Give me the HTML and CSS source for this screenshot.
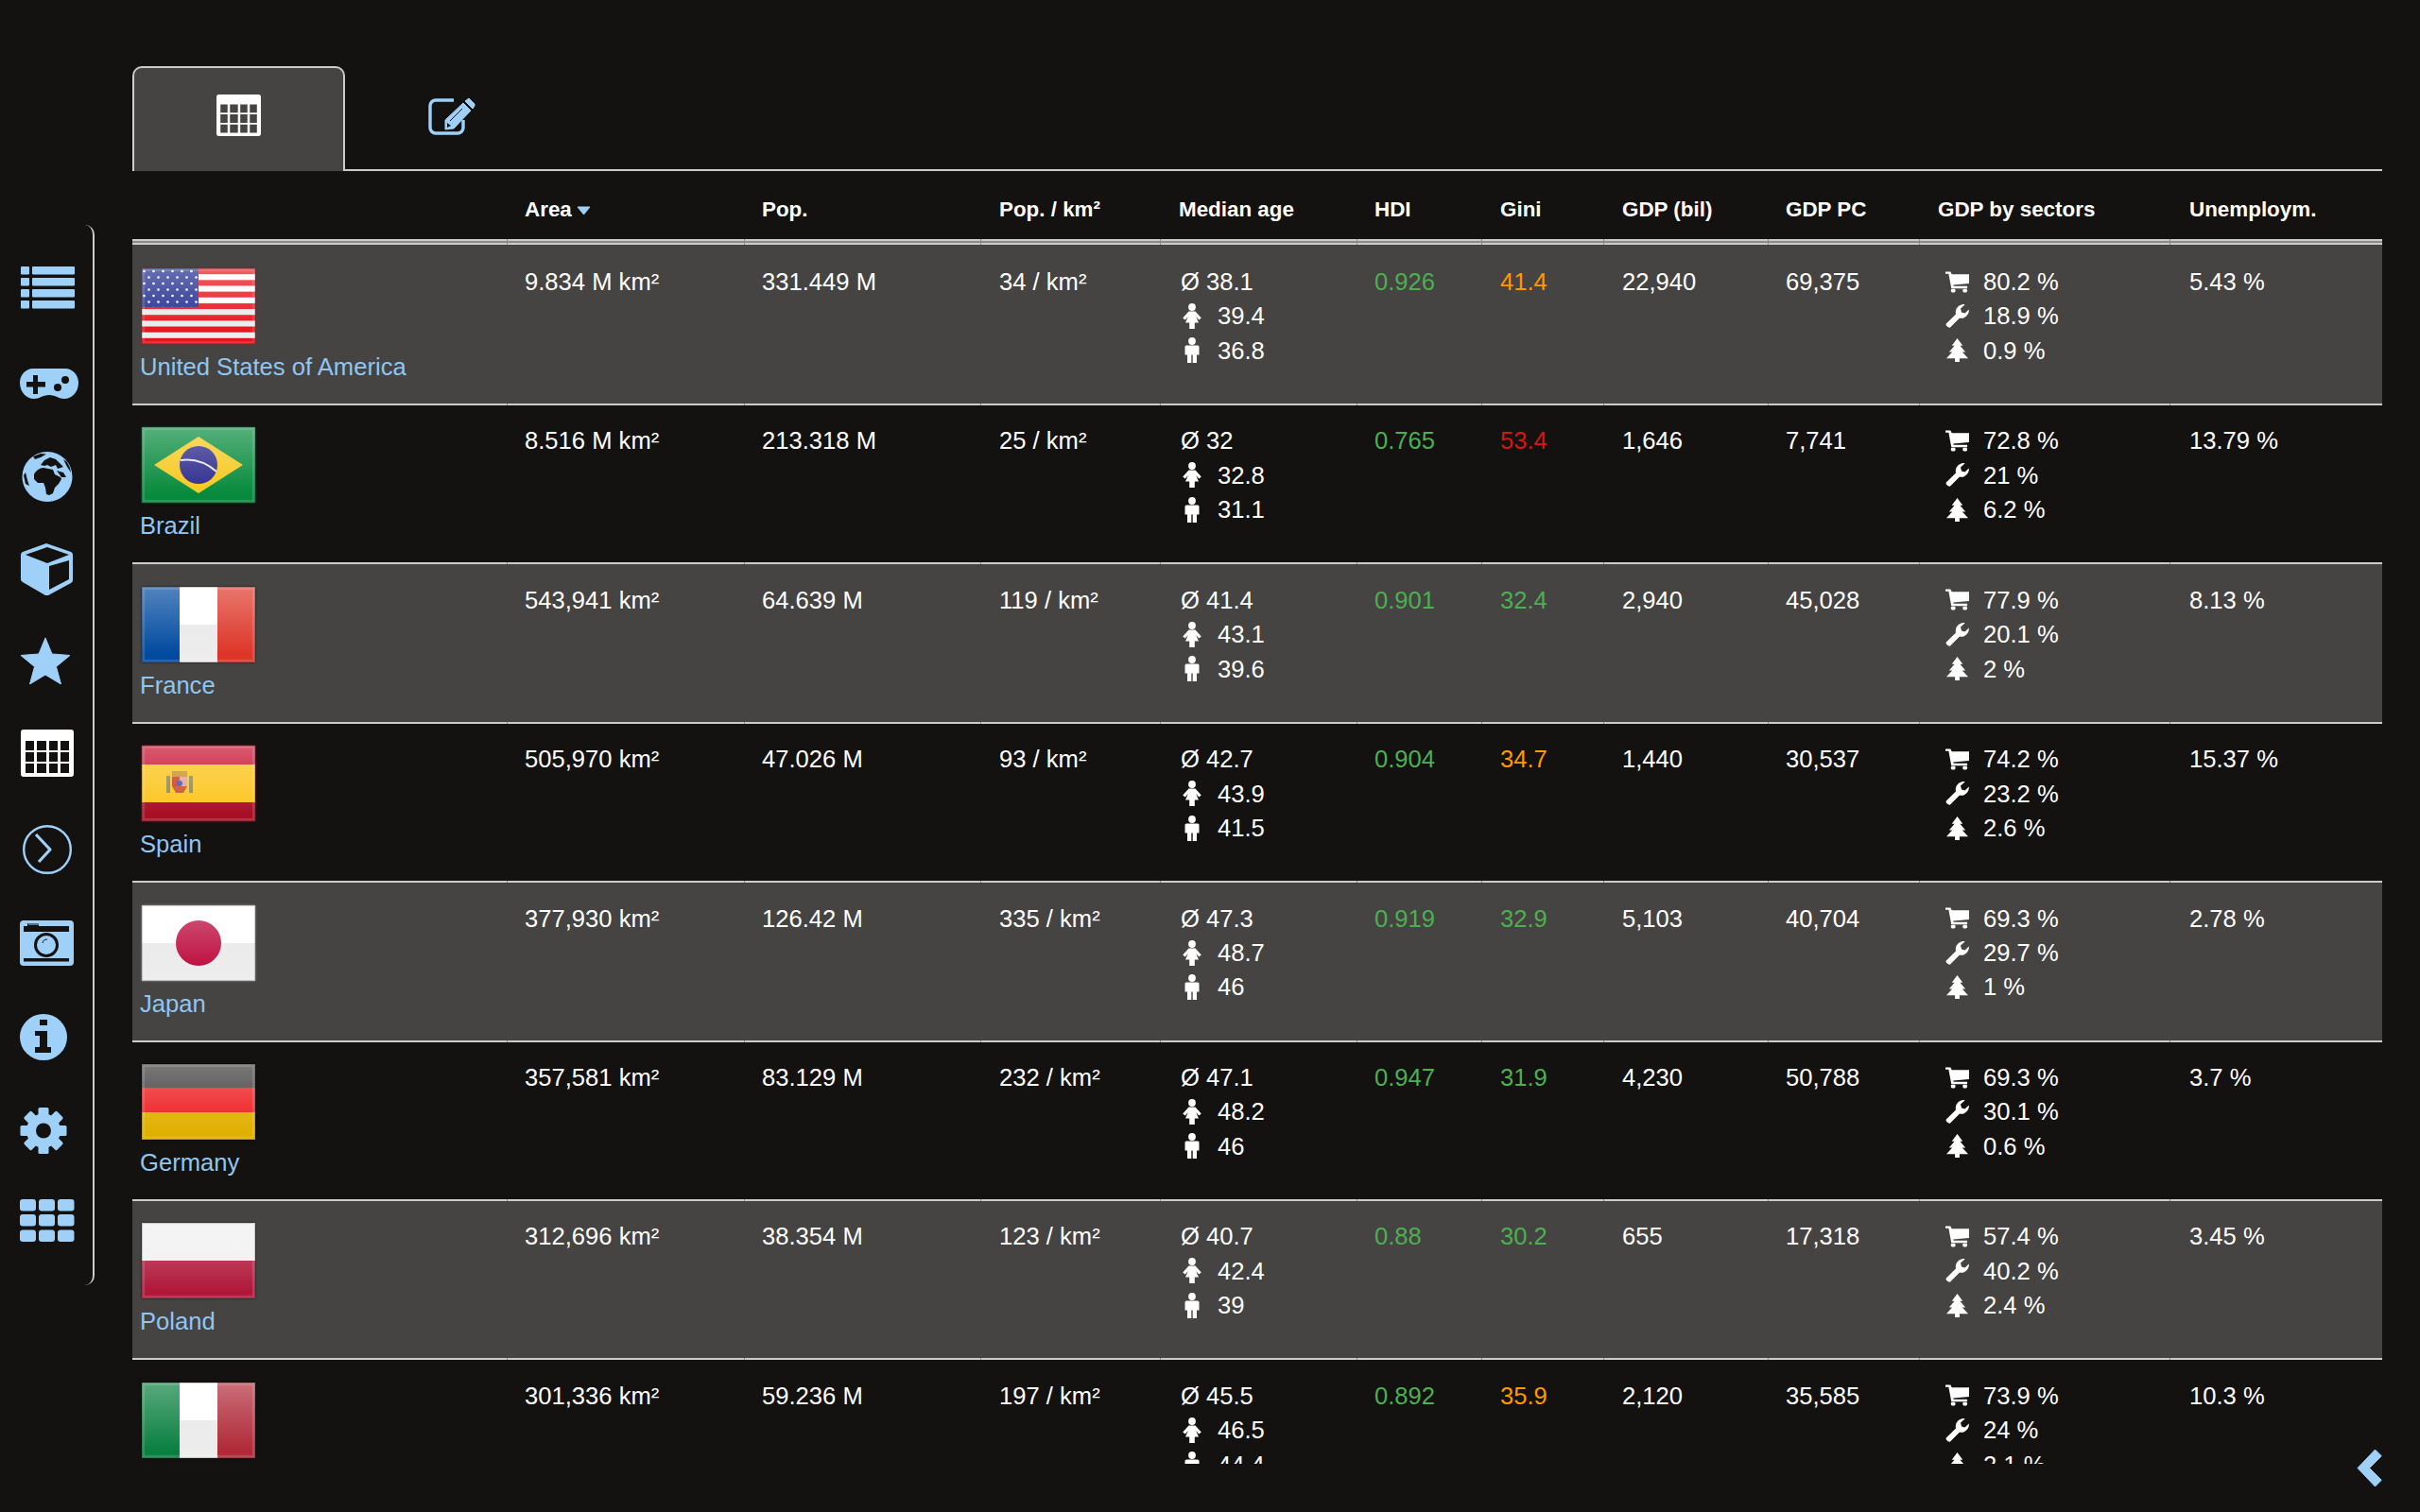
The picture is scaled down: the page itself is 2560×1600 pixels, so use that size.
FILE: index.html
```html
<!DOCTYPE html>
<html lang="en">
<head>
    <meta charset="UTF-8">
    <meta name="viewport" content="width=device-width, initial-scale=1.0">
    <title>Countries</title>
    <link rel="stylesheet" href="styles.css">
</head>
<body>
    <svg class="defs" width="0" height="0">
        <pattern id="stars" width="10" height="13" patternUnits="userSpaceOnUse">
            <circle cx="2.5" cy="3" r="1.3" fill="#fff"/>
            <circle cx="7.5" cy="9.5" r="1.3" fill="#fff"/>
        </pattern>
        <linearGradient id="white-band" x1="0" y1="0" x2="0" y2="1">
            <stop offset="0.5" stop-color="#fff"/>
            <stop offset="0.5" stop-color="#e8e8e8"/>
            <stop offset="1" stop-color="#eeeeee"/>
        </linearGradient>
        <symbol id="i-calendar" viewBox="0 0 56 50" preserveAspectRatio="none">
            <path fill-rule="evenodd" d="M3 0H53a3 3 0 0 1 3 3V47a3 3 0 0 1-3 3H3a3 3 0 0 1-3-3V3a3 3 0 0 1 3-3Z
                M5 12h9v10h-9Z M17 12h10v10h-10Z M30 12h9v10h-9Z M42 12h9v10h-9Z
                M5 24h9v10h-9Z M17 24h10v10h-10Z M30 24h9v10h-9Z M42 24h9v10h-9Z
                M5 36h9v10h-9Z M17 36h10v10h-10Z M30 36h9v10h-9Z M42 36h9v10h-9Z"/>
        </symbol>
        <symbol id="i-edit" viewBox="0 0 50 40">
            <path d="M27 3H8a6 6 0 0 0-6 6V32a6 6 0 0 0 6 6H31a6 6 0 0 0 6-6V24" fill="none" stroke="currentColor" stroke-width="3.4"/>
            <path d="M18 34L18 24 37 6 45 14 27 33ZM39 4L43 1 49 7 49 9 47 12Z" stroke="currentColor" stroke-linejoin="round"/>
            <path d="M23 25L36 12" stroke="#131211" stroke-width="1"/>
            <path d="M20 32V27L24 30Z" fill="#131211"/>
        </symbol>
        <symbol id="i-female" viewBox="0 0 20 27">
            <circle cx="10" cy="4" r="3.900"/>
            <path d="M6.500 8.500H13.500L19.800 15.500 17.300 17.500 14.200 14 17 20.500H12.800V27H7.200V20.500H3L5.800 14 2.700 17.500 .2 15.500Z"/>
        </symbol>
        <symbol id="i-male" viewBox="0 0 20 27">
            <circle cx="10" cy="4" r="3.900"/>
            <path d="M4 8.500H16A1.500 1.500 0 0 1 17.500 10V18.500H15V27H10.700V18.500H9.300V27H5V18.500H2.500V10A1.500 1.500 0 0 1 4 8.500Z"/>
        </symbol>
        <symbol id="i-cart" viewBox="0 0 26 23">
            <path d="M0 0H5.500L7 3H26V13L8.500 14.500 9 16H24V18.500H6.500L3.500 2.500H0Z"/>
            <rect x="6" y="19" width="5" height="4" rx="1.500"/>
            <rect x="19" y="19" width="5" height="4" rx="1.500"/>
        </symbol>
        <symbol id="i-wrench" viewBox="0 0 25 25">
            <path d="M.8 20.500L11 10.500C10 6 12.500 1 18.500 0 19.500 0 20.500 0 20.500 .5L16 4.500 17 8.500 20.500 9.500 24.800 5.500C25.500 11 20 16 15 14.500L5 24.500C3.500 25.500 -.5 22.500 .8 20.500Z"/>
        </symbol>
        <symbol id="i-tree" viewBox="0 0 24 26">
            <path d="M12 0L18 8H15L21 15H17.500L24 22H14.500V26H9.500V22H0L6.500 15H3L9 8H6Z"/>
        </symbol>
        <symbol id="i-list" viewBox="0 0 57 45">
            <rect width="9" height="8.500" rx="1"/><rect x="12" width="45" height="8.500" rx="1"/>
            <rect y="12" width="9" height="8.500" rx="1"/><rect x="12" y="12" width="45" height="8.500" rx="1"/>
            <rect y="24" width="9" height="8.500" rx="1"/><rect x="12" y="24" width="45" height="8.500" rx="1"/>
            <rect y="36" width="9" height="8.500" rx="1"/><rect x="12" y="36" width="45" height="8.500" rx="1"/>
        </symbol>
        <symbol id="i-game" viewBox="0 0 62 32">
            <path d="M14 0H48C56 0 62 7 62 15 62 25 55 32 47 32 41 32 38 28 31 28 24 28 21 32 15 32 7 32 0 25 0 15 0 7 6 0 14 0Z"/>
            <path d="M14 7H19V14H27V19.500H19V27H14V19.500H7V14H14Z" fill="#131211"/>
            <circle cx="48" cy="12" r="4" fill="#131211"/>
            <circle cx="40" cy="20" r="4" fill="#131211"/>
        </symbol>
        <symbol id="i-globe" viewBox="0 0 54 53">
            <circle cx="27" cy="26.500" r="26.500"/>
            <g fill="#131211">
                <path d="M13 24C15 20 19 17 23 17L28 18 33 19 35 24 41 27 42 29 39 34 35 38 33 44 29 46 26 45 25 38 23 33 17 33 13 29Z"/>
                <path d="M20 14L24 9 30 6 36 8 40 12 44 16 38 18 36 14 31 16 27 14 24 15Z"/>
                <path d="M37 20L44 22 47 27 42 27Z"/>
                <path d="M2 25L4 22 6 30 8 36 4 34Z"/>
                <path d="M12 5L20 2 26 2.500 20 6 14 8Z"/>
                <path d="M44 8L48 11 51 17 52 22 48 16Z"/>
            </g>
        </symbol>
        <symbol id="i-cube" viewBox="0 0 55 55">
            <path d="M27 0L53 9Q55 10 55 12V39Q55 41 53 42L29 55Q28 55 26 55L2 41Q0 40 0 38V12Q0 10 2 9Z"/>
            <path d="M5 12L28 4 51 12 28 21ZM30 24L51 18V38L30 49Z" fill="#131211"/>
        </symbol>
        <symbol id="i-star" viewBox="0 0 54 50">
            <path d="M27 1L34 18 53 19.500 38.500 31.500 43.500 50 27 40 10.500 50 15.500 31.500 1 19.500 20 18Z" stroke="currentColor" stroke-linejoin="round"/>
        </symbol>
        <symbol id="i-clock" viewBox="0 0 52 52">
            <ellipse cx="26" cy="26" rx="24.800" ry="24.800" fill="none" stroke="currentColor" stroke-width="2.400"/>
            <path d="M14 10L29 26 17 39" fill="none" stroke="currentColor" stroke-width="3.200" stroke-linejoin="round"/>
        </symbol>
        <symbol id="i-camera" viewBox="0 0 57 48">
            <rect width="57" height="48" rx="4"/>
            <path d="M8 3H20V6H52V12H4V6H8Z" fill="#131211"/>
            <rect x="9" y="3" width="11" height="2" fill="#9fd0f8" opacity=".5"/>
            <rect x="4" y="40" width="48" height="3.500" fill="#131211"/>
            <circle cx="28" cy="26" r="11.500" fill="none" stroke="#131211" stroke-width="3"/>
            <path d="M24 24A5 5 0 0 1 29 20" fill="none" stroke="#131211" stroke-width="1"/>
        </symbol>
        <symbol id="i-info" viewBox="0 0 50 49">
            <ellipse cx="25" cy="24.500" rx="25" ry="24.500"/>
            <path d="M21 6H29V12H21ZM16 18H29V35H33V41H16V35H21V23H16Z" fill="#131211"/>
        </symbol>
        <symbol id="i-gear" viewBox="0 0 50 49">
            <g transform="translate(25 24.500)">
                <circle r="18"/>
                <rect x="-5.500" y="-24.500" width="11" height="49" rx="1.500"/>
                <rect x="-5.500" y="-24.500" width="11" height="49" rx="1.500" transform="rotate(45)"/>
                <rect x="-5.500" y="-24.500" width="11" height="49" rx="1.500" transform="rotate(90)"/>
                <rect x="-5.500" y="-24.500" width="11" height="49" rx="1.500" transform="rotate(135)"/>
                <circle r="8" fill="#131211"/>
            </g>
        </symbol>
        <symbol id="i-apps" viewBox="0 0 58 46">
            <rect width="17" height="12.500" rx="3"/><rect x="20" width="17" height="12.500" rx="3"/><rect x="40" width="17.500" height="12.500" rx="3"/>
            <rect y="16" width="17" height="12.500" rx="3"/><rect x="20" y="16" width="17" height="12.500" rx="3"/><rect x="40" y="16" width="17.500" height="12.500" rx="3"/>
            <rect y="32.500" width="17" height="12.500" rx="3"/><rect x="20" y="32.500" width="17" height="12.500" rx="3"/><rect x="40" y="32.500" width="17.500" height="12.500" rx="3"/>
        </symbol>
    </svg>

    <div class="app">
        <nav class="sidebar">
            <a class="side-item"><svg class="list"><use href="#i-list"/></svg></a>
            <a class="side-item"><svg class="game"><use href="#i-game"/></svg></a>
            <a class="side-item"><svg class="globe"><use href="#i-globe"/></svg></a>
            <a class="side-item"><svg class="cube"><use href="#i-cube"/></svg></a>
            <a class="side-item"><svg class="star"><use href="#i-star"/></svg></a>
            <a class="side-item active"><svg class="calendar"><use href="#i-calendar"/></svg></a>
            <a class="side-item"><svg class="clock"><use href="#i-clock"/></svg></a>
            <a class="side-item"><svg class="camera"><use href="#i-camera"/></svg></a>
            <a class="side-item"><svg class="info"><use href="#i-info"/></svg></a>
            <a class="side-item"><svg class="gear"><use href="#i-gear"/></svg></a>
            <a class="side-item"><svg class="apps"><use href="#i-apps"/></svg></a>
        </nav>

        <main class="content">
            <div class="tabs">
                <a class="tab active"><svg class="tab-calendar"><use href="#i-calendar"/></svg></a>
                <a class="tab"><svg class="tab-edit"><use href="#i-edit"/></svg></a>
            </div>

            <div class="table-wrap">
                <table class="countries">
                    <colgroup>
                        <col class="c-name"><col class="c-area"><col class="c-pop"><col class="c-dens">
                        <col class="c-age"><col class="c-hdi"><col class="c-gini"><col class="c-gdp">
                        <col class="c-gdppc"><col class="c-sect"><col class="c-unemp">
                    </colgroup>
                    <thead>
                        <tr>
                            <th></th>
                            <th>Area<svg class="sort" viewBox="0 0 15 10"><path d="M1 1H14L7.500 9Z" stroke="currentColor" stroke-linejoin="round"/></svg></th>
                            <th>Pop.</th>
                            <th>Pop. / km²</th>
                            <th>Median age</th>
                            <th>HDI</th>
                            <th>Gini</th>
                            <th>GDP (bil)</th>
                            <th>GDP PC</th>
                            <th>GDP by sectors</th>
                            <th>Unemploym.</th>
                        </tr>
                    </thead>
                    <tbody>
                        <tr>
                            <td>
                                <div class="flag red-edge">
                                    <svg viewBox="0 0 120 80">
                                        <rect width="120" height="80" fill="url(#white-band)"/>
                                        <g fill="#e81018">
                                            <rect width="120" height="6.150"/><rect y="12.300" width="120" height="6.150"/><rect y="24.600" width="120" height="6.150"/>
                                            <rect y="36.900" width="120" height="6.150"/><rect y="49.200" width="120" height="6.150"/><rect y="61.500" width="120" height="6.150"/>
                                            <rect y="73.800" width="120" height="6.200"/>
                                        </g>
                                        <rect width="60" height="41" fill="#1f2a8c"/>
                                        <rect width="60" height="41" fill="url(#stars)"/>
                                    </svg>
                                </div>
                                <a class="name">United States of America</a>
                            </td>
                            <td>9.834 M km²</td>
                            <td>331.449 M</td>
                            <td>34 / km²</td>
                            <td>
                                <div class="stat">Ø 38.1</div>
                                <div class="stat"><svg class="ic"><use href="#i-female"/></svg>39.4</div>
                                <div class="stat"><svg class="ic"><use href="#i-male"/></svg>36.8</div>
                            </td>
                            <td class="good">0.926</td>
                            <td class="mid">41.4</td>
                            <td>22,940</td>
                            <td>69,375</td>
                            <td>
                                <div class="stat sector"><svg class="ic"><use href="#i-cart"/></svg>80.2 %</div>
                                <div class="stat sector"><svg class="ic"><use href="#i-wrench"/></svg>18.9 %</div>
                                <div class="stat sector"><svg class="ic"><use href="#i-tree"/></svg>0.9 %</div>
                            </td>
                            <td>5.43 %</td>
                        </tr>
                        <tr>
                            <td>
                                <div class="flag green-edge">
                                    <svg viewBox="0 0 120 80">
                                        <rect width="120" height="80" fill="#068a3c"/>
                                        <path d="M13 40L60 10 107 40 60 70Z" fill="#f6c81e"/>
                                        <circle cx="60" cy="40" r="20" fill="#2c2a8c"/>
                                        <path d="M41 35Q62 32 79 47" fill="none" stroke="#e6e6e6" stroke-width="2"/>
                                    </svg>
                                </div>
                                <a class="name">Brazil</a>
                            </td>
                            <td>8.516 M km²</td>
                            <td>213.318 M</td>
                            <td>25 / km²</td>
                            <td>
                                <div class="stat">Ø 32</div>
                                <div class="stat"><svg class="ic"><use href="#i-female"/></svg>32.8</div>
                                <div class="stat"><svg class="ic"><use href="#i-male"/></svg>31.1</div>
                            </td>
                            <td class="good">0.765</td>
                            <td class="bad">53.4</td>
                            <td>1,646</td>
                            <td>7,741</td>
                            <td>
                                <div class="stat sector"><svg class="ic"><use href="#i-cart"/></svg>72.8 %</div>
                                <div class="stat sector"><svg class="ic"><use href="#i-wrench"/></svg>21 %</div>
                                <div class="stat sector"><svg class="ic"><use href="#i-tree"/></svg>6.2 %</div>
                            </td>
                            <td>13.79 %</td>
                        </tr>
                        <tr>
                            <td>
                                <div class="flag">
                                    <svg viewBox="0 0 120 80">
                                        <rect width="40" height="80" fill="#004a9f"/>
                                        <rect x="40" width="40" height="80" fill="url(#white-band)"/>
                                        <rect x="80" width="40" height="80" fill="#dd3527"/>
                                    </svg>
                                </div>
                                <a class="name">France</a>
                            </td>
                            <td>543,941 km²</td>
                            <td>64.639 M</td>
                            <td>119 / km²</td>
                            <td>
                                <div class="stat">Ø 41.4</div>
                                <div class="stat"><svg class="ic"><use href="#i-female"/></svg>43.1</div>
                                <div class="stat"><svg class="ic"><use href="#i-male"/></svg>39.6</div>
                            </td>
                            <td class="good">0.901</td>
                            <td class="good">32.4</td>
                            <td>2,940</td>
                            <td>45,028</td>
                            <td>
                                <div class="stat sector"><svg class="ic"><use href="#i-cart"/></svg>77.9 %</div>
                                <div class="stat sector"><svg class="ic"><use href="#i-wrench"/></svg>20.1 %</div>
                                <div class="stat sector"><svg class="ic"><use href="#i-tree"/></svg>2 %</div>
                            </td>
                            <td>8.13 %</td>
                        </tr>
                        <tr>
                            <td>
                                <div class="flag red-edge">
                                    <svg viewBox="0 0 120 80">
                                        <rect width="120" height="20" fill="#c60b2a"/>
                                        <rect y="60" width="120" height="20" fill="#a80f24"/>
                                        <rect y="20" width="120" height="40" fill="#fcc41c"/>
                                        <rect x="26" y="32" width="4" height="18" fill="#8a8a5a"/>
                                        <rect x="50" y="32" width="4" height="18" fill="#8a8a5a"/>
                                        <rect x="32" y="27" width="16" height="6" fill="#c9902a"/>
                                        <rect x="32" y="33" width="8" height="10" fill="#c8402a"/>
                                        <rect x="40" y="33" width="8" height="10" fill="#e0a0a8"/>
                                        <path d="M32 43H48L44 50H36Z" fill="#c8502a"/>
                                        <circle cx="40" cy="40" r="3" fill="#3a5aa8"/>
                                    </svg>
                                </div>
                                <a class="name">Spain</a>
                            </td>
                            <td>505,970 km²</td>
                            <td>47.026 M</td>
                            <td>93 / km²</td>
                            <td>
                                <div class="stat">Ø 42.7</div>
                                <div class="stat"><svg class="ic"><use href="#i-female"/></svg>43.9</div>
                                <div class="stat"><svg class="ic"><use href="#i-male"/></svg>41.5</div>
                            </td>
                            <td class="good">0.904</td>
                            <td class="mid">34.7</td>
                            <td>1,440</td>
                            <td>30,537</td>
                            <td>
                                <div class="stat sector"><svg class="ic"><use href="#i-cart"/></svg>74.2 %</div>
                                <div class="stat sector"><svg class="ic"><use href="#i-wrench"/></svg>23.2 %</div>
                                <div class="stat sector"><svg class="ic"><use href="#i-tree"/></svg>2.6 %</div>
                            </td>
                            <td>15.37 %</td>
                        </tr>
                        <tr>
                            <td>
                                <div class="flag pale-edge">
                                    <svg viewBox="0 0 120 80">
                                        <rect width="120" height="80" fill="url(#white-band)"/>
                                        <circle cx="60" cy="40" r="24" fill="#bc0a3c"/>
                                    </svg>
                                </div>
                                <a class="name">Japan</a>
                            </td>
                            <td>377,930 km²</td>
                            <td>126.42 M</td>
                            <td>335 / km²</td>
                            <td>
                                <div class="stat">Ø 47.3</div>
                                <div class="stat"><svg class="ic"><use href="#i-female"/></svg>48.7</div>
                                <div class="stat"><svg class="ic"><use href="#i-male"/></svg>46</div>
                            </td>
                            <td class="good">0.919</td>
                            <td class="good">32.9</td>
                            <td>5,103</td>
                            <td>40,704</td>
                            <td>
                                <div class="stat sector"><svg class="ic"><use href="#i-cart"/></svg>69.3 %</div>
                                <div class="stat sector"><svg class="ic"><use href="#i-wrench"/></svg>29.7 %</div>
                                <div class="stat sector"><svg class="ic"><use href="#i-tree"/></svg>1 %</div>
                            </td>
                            <td>2.78 %</td>
                        </tr>
                        <tr>
                            <td>
                                <div class="flag">
                                    <svg viewBox="0 0 120 80">
                                        <rect width="120" height="25" fill="#3a3a3a"/>
                                        <rect y="25" width="120" height="26" fill="#ee1c20"/>
                                        <rect y="51" width="120" height="29" fill="#e0b000"/>
                                    </svg>
                                </div>
                                <a class="name">Germany</a>
                            </td>
                            <td>357,581 km²</td>
                            <td>83.129 M</td>
                            <td>232 / km²</td>
                            <td>
                                <div class="stat">Ø 47.1</div>
                                <div class="stat"><svg class="ic"><use href="#i-female"/></svg>48.2</div>
                                <div class="stat"><svg class="ic"><use href="#i-male"/></svg>46</div>
                            </td>
                            <td class="good">0.947</td>
                            <td class="good">31.9</td>
                            <td>4,230</td>
                            <td>50,788</td>
                            <td>
                                <div class="stat sector"><svg class="ic"><use href="#i-cart"/></svg>69.3 %</div>
                                <div class="stat sector"><svg class="ic"><use href="#i-wrench"/></svg>30.1 %</div>
                                <div class="stat sector"><svg class="ic"><use href="#i-tree"/></svg>0.6 %</div>
                            </td>
                            <td>3.7 %</td>
                        </tr>
                        <tr>
                            <td>
                                <div class="flag">
                                    <svg viewBox="0 0 120 80">
                                        <rect width="120" height="40" fill="#f0f0f0"/>
                                        <rect y="40" width="120" height="40" fill="#b0183a"/>
                                    </svg>
                                </div>
                                <a class="name">Poland</a>
                            </td>
                            <td>312,696 km²</td>
                            <td>38.354 M</td>
                            <td>123 / km²</td>
                            <td>
                                <div class="stat">Ø 40.7</div>
                                <div class="stat"><svg class="ic"><use href="#i-female"/></svg>42.4</div>
                                <div class="stat"><svg class="ic"><use href="#i-male"/></svg>39</div>
                            </td>
                            <td class="good">0.88</td>
                            <td class="good">30.2</td>
                            <td>655</td>
                            <td>17,318</td>
                            <td>
                                <div class="stat sector"><svg class="ic"><use href="#i-cart"/></svg>57.4 %</div>
                                <div class="stat sector"><svg class="ic"><use href="#i-wrench"/></svg>40.2 %</div>
                                <div class="stat sector"><svg class="ic"><use href="#i-tree"/></svg>2.4 %</div>
                            </td>
                            <td>3.45 %</td>
                        </tr>
                        <tr>
                            <td>
                                <div class="flag">
                                    <svg viewBox="0 0 120 80">
                                        <rect width="40" height="80" fill="#0a8040"/>
                                        <rect x="40" width="40" height="80" fill="url(#white-band)"/>
                                        <rect x="80" width="40" height="80" fill="#b02a38"/>
                                    </svg>
                                </div>
                                <a class="name">Italy</a>
                            </td>
                            <td>301,336 km²</td>
                            <td>59.236 M</td>
                            <td>197 / km²</td>
                            <td>
                                <div class="stat">Ø 45.5</div>
                                <div class="stat"><svg class="ic"><use href="#i-female"/></svg>46.5</div>
                                <div class="stat"><svg class="ic"><use href="#i-male"/></svg>44.4</div>
                            </td>
                            <td class="good">0.892</td>
                            <td class="mid">35.9</td>
                            <td>2,120</td>
                            <td>35,585</td>
                            <td>
                                <div class="stat sector"><svg class="ic"><use href="#i-cart"/></svg>73.9 %</div>
                                <div class="stat sector"><svg class="ic"><use href="#i-wrench"/></svg>24 %</div>
                                <div class="stat sector"><svg class="ic"><use href="#i-tree"/></svg>2.1 %</div>
                            </td>
                            <td>10.3 %</td>
                        </tr>
                    </tbody>
                </table>
            </div>
        </main>
    </div>

    <a class="collapse"><svg viewBox="0 0 27 41"><path d="M1 20.500L19.500 1 26 7.500 26 8 13.500 20.500 26 33 26 33.500 19.500 40Z" stroke="currentColor" stroke-linejoin="round"/></svg></a>
</body>
</html>
```

FILE: styles.css
```css
html, body {
    margin: 0;
    height: 100%;
}
body {
    font-family: "Liberation Sans", Arial, sans-serif;
    font-size: 25.6px;
    line-height: 36.4px;
    color: #fff;
    background-color: #131211;
    overflow: hidden;
}
svg {
    fill: currentColor;
}
.defs {
    position: absolute;
}
.app {
    display: flex;
    align-items: flex-start;
}

/* side menu */
.sidebar {
    box-sizing: border-box;
    width: 100px;
    height: 1122px;
    margin-top: 238px;
    padding-left: 21px;
    border-right: 2px solid #ccc;
    border-radius: 0 10px 10px 0;
    color: #9fd0f8;
}
.side-item {
    display: block;
}
.side-item svg {
    display: block;
}
.side-item.active {
    color: #fff;
}
.list { width: 57px; height: 45px; margin: 44px 0 0 1px; }
.game { width: 62px; height: 32px; margin-top: 63px; }
.globe { width: 54px; height: 53px; margin: 56px 0 0 2px; }
.cube { width: 55px; height: 55px; margin: 44px 0 0 1px; }
.star { width: 54px; height: 50px; margin-top: 44px; }
.calendar { width: 56px; height: 50px; margin: 48px 0 0 1px; }
.clock { width: 52px; height: 52px; margin: 51px 0 0 3px; }
.camera { width: 57px; height: 48px; margin-top: 49px; }
.info { width: 50px; height: 49px; margin-top: 51px; }
.gear { width: 50px; height: 49px; margin-top: 50px; }
.apps { width: 58px; height: 46px; margin-top: 48px; }

/* tabs */
.content {
    width: 2380px;
    margin-left: 40px;
    padding-top: 70px;
}
.tabs {
    display: flex;
    height: 109px;
    border-bottom: 2px solid #ccc;
}
.tab {
    box-sizing: border-box;
    display: flex;
    align-items: center;
    justify-content: center;
    width: 225px;
    height: 111px;
    padding-bottom: 2px;
    color: #9fd0f8;
}
.tab.active {
    color: #fff;
    background-color: #454443;
    border: 2px solid #ccc;
    border-bottom: 0;
    border-radius: 10px 10px 0 0;
}
.tab-calendar {
    width: 47px;
    height: 44px;
    margin-bottom: 7px;
}
.tab-edit {
    width: 50px;
    height: 40px;
    margin-bottom: 4px;
}

/* table */
.table-wrap {
    height: 1368px;
    overflow: hidden;
}
.countries {
    width: 2380px;
    table-layout: fixed;
    border-collapse: separate;
    border-spacing: 0;
}
.c-name { width: 396px; }
.c-area { width: 251px; }
.c-pop { width: 250px; }
.c-dens { width: 190px; }
.c-age { width: 208px; }
.c-hdi { width: 132px; }
.c-gini { width: 129px; }
.c-gdp { width: 174px; }
.c-gdppc { width: 160px; }
.c-sect { width: 265px; }
.c-unemp { width: 225px; }

.countries th {
    position: relative;
    height: 78px;
    box-sizing: border-box;
    padding: 0 0 16px 19px;
    font-size: 22.4px;
    line-height: 31px;
    text-align: left;
    vertical-align: bottom;
    border-bottom: 6px double #ccc;
    background: linear-gradient(#8a8a8a, #8a8a8a) bottom / 100% 6px no-repeat border-box;
}
.countries td {
    position: relative;
    height: 168.4px;
    box-sizing: border-box;
    padding: 19.4px 0 0 19px;
    vertical-align: top;
    border-bottom: 2px solid #ccc;
}
.countries tbody tr:first-child td {
    height: 170px;
    padding-top: 21px;
}
.countries th:first-child,
.countries td:first-child {
    padding-left: 8px;
}
.countries th:nth-child(4),
.countries td:nth-child(4),
.countries th:nth-child(5),
.countries td:nth-child(5),
.countries th:nth-child(7),
.countries td:nth-child(7),
.countries th:nth-child(8),
.countries td:nth-child(8),
.countries th:nth-child(10),
.countries td:nth-child(10) {
    padding-left: 20px;
}
.countries th:nth-child(11),
.countries td:nth-child(11) {
    padding-left: 21px;
}
/* small tick where a column meets the rule under it */
.countries th:not(:first-child)::after,
.countries td:not(:first-child)::after {
    content: "";
    position: absolute;
    left: 0;
    bottom: -2px;
    width: 1px;
    height: 2px;
    background-color: #888;
}
.countries th:not(:first-child)::after {
    bottom: -6px;
    height: 6px;
}
.countries tbody tr:nth-child(odd) td {
    background-color: #454443;
}
.sort {
    width: 15px;
    height: 10px;
    margin-left: 5px;
    color: #9fd0f8;
    vertical-align: 1px;
}
.good { color: #4caf50; }
.mid { color: #ff9800; }
.bad { color: #d81414; }

.flag {
    position: relative;
    width: 120px;
    height: 80px;
    margin: 4px 0 6px 2px;
    box-shadow: 0 0 2px rgba(0, 0, 0, 0.7);
}
.flag svg {
    display: block;
    width: 120px;
    height: 80px;
    filter: blur(0.6px);
}
/* glossy layer on the flag */
.flag::after {
    content: "";
    position: absolute;
    inset: 0;
    background: linear-gradient(rgba(255, 255, 255, 0.32), rgba(255, 255, 255, 0) 90%);
    box-shadow: inset 0 0 1px 1px rgba(0, 0, 0, 0.2), inset 0 0 1px 3px rgba(255, 255, 255, 0.16);
}
.red-edge { box-shadow: 0 0 2px #a01020; }
.green-edge { box-shadow: 0 0 2px #0a6a30; }
.pale-edge { box-shadow: 0 0 2px #999; }

.name {
    display: block;
    color: #90c6f2;
}
.stat {
    display: flex;
    align-items: center;
    height: 36.4px;
    padding-left: 2px;
}
.stat .ic {
    width: 20px;
    height: 27px;
    margin: 0 17px 0 2px;
}
.sector {
    padding-left: 8px;
}
.sector .ic {
    width: 25px;
    height: 25px;
    margin: 0 15px 0 0;
}
.collapse {
    position: absolute;
    left: 2493px;
    top: 1533px;
    width: 27px;
    height: 41px;
    color: #9fd0f8;
}
.collapse svg {
    display: block;
    width: 27px;
    height: 41px;
}
```
